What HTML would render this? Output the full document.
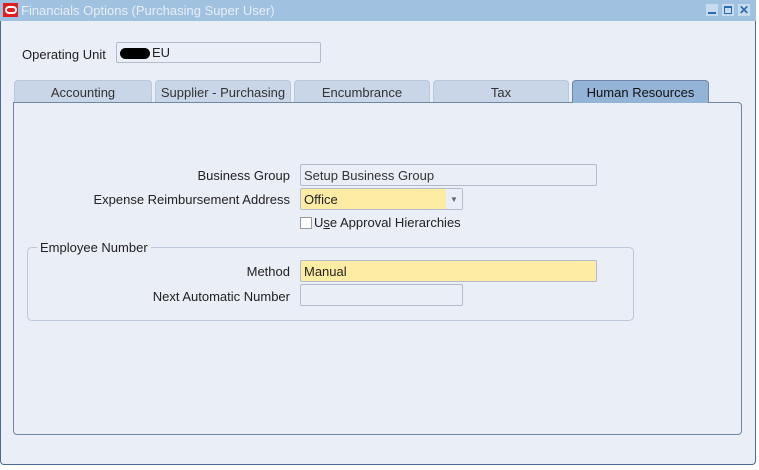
<!DOCTYPE html>
<html><head><style>
body{margin:0;width:759px;height:470px;background:#fff;font-family:"Liberation Sans",sans-serif;font-size:13px;color:#222;position:relative;overflow:hidden}
.a{position:absolute}
#win{left:0;top:0;width:754px;height:464px;border:1px solid #4a6a9a;border-top:none;background:#eaeef6;border-radius:0 0 4px 4px}
#tb{left:0;top:0;width:756px;height:21px;background:#a0c2e0}
.lbl{position:absolute;text-align:right;white-space:nowrap}
.fld{position:absolute;border:1px solid #b4bccb;box-sizing:border-box;padding-left:3px;line-height:21px;border-radius:2px}
.tab{position:absolute;top:80px;height:22px;background:#c8d6e8;border:1px solid #b7c7dc;border-bottom:none;border-radius:4px 4px 0 0;box-sizing:border-box;text-align:center;line-height:24px;color:#333}
</style></head><body>
<div id="win" class="a"></div>
<div id="tb" class="a"></div>
<div class="a" style="left:3px;top:3px;width:15px;height:14px;background:#e02020"><div class="a" style="left:2px;top:3px;width:8px;height:4px;border:2px solid #fff;border-radius:5px"></div></div>
<div class="a" style="left:21px;top:3px;color:#e6eef8;font-size:13px">Financials Options (Purchasing Super User)</div>
<div class="a" style="left:706px;top:4px;width:12px;height:12px;background:#c7dbef"><div class="a" style="left:2px;top:8px;width:8px;height:2px;background:#2a6ab0"></div></div>
<div class="a" style="left:722px;top:4px;width:12px;height:12px;background:#c7dbef"><div class="a" style="left:2px;top:2px;width:6px;height:5px;border:1px solid #2a6ab0;border-top-width:2px"></div></div>
<div class="a" style="left:738px;top:4px;width:12px;height:12px;background:#c7dbef;color:#2a6ab0;font-weight:bold;font-size:12px;line-height:12px;text-align:center">✕</div>

<div class="lbl" style="left:22px;top:47px">Operating Unit</div>
<div class="fld" style="left:116px;top:42px;width:205px;height:21px;background:#eaeef6;line-height:20px"><span style="display:inline-block;width:30px;height:11px;background:#000;border-radius:6px;vertical-align:middle;margin-right:2px"></span>EU</div>

<div class="tab" style="left:14px;width:138px">Accounting</div>
<div class="tab" style="left:155px;width:136px">Supplier - Purchasing</div>
<div class="tab" style="left:294px;width:136px">Encumbrance</div>
<div class="tab" style="left:433px;width:136px">Tax</div>
<div class="a" style="left:13px;top:102px;width:727px;height:331px;border:1px solid #6f86a8;border-radius:0 4px 4px 4px"></div>
<div class="tab" style="left:572px;width:137px;background:#93b4d6;border-color:#6f86a8;height:23px;color:#111;z-index:2">Human Resources</div>

<div class="lbl" style="right:469px;top:168px">Business Group</div>
<div class="fld" style="left:300px;top:164px;width:297px;height:22px;background:#eaeef6;color:#333">Setup Business Group</div>
<div class="lbl" style="right:469px;top:192px">Expense Reimbursement Address</div>
<div class="fld" style="left:300px;top:188px;width:163px;height:22px;background:#feeca4">Office<span class="a" style="right:0;top:0;width:16px;height:20px;background:#eaeef6;color:#666;font-size:8px;text-align:center">▼</span></div>
<div class="a" style="left:300px;top:217px;width:10px;height:10px;border:1px solid #999;background:#fff"></div>
<div class="a" style="left:314px;top:215px">U<u>s</u>e Approval Hierarchies</div>

<div class="a" style="left:27px;top:247px;width:605px;height:72px;border:1px solid #bcc8d8;border-radius:5px"></div>
<div class="a" style="left:37px;top:240px;background:#eaeef6;padding:0 3px">Employee Number</div>
<div class="lbl" style="right:469px;top:264px">Method</div>
<div class="fld" style="left:300px;top:260px;width:297px;height:22px;background:#feeca4">Manual</div>
<div class="lbl" style="right:469px;top:289px">Next Automatic Number</div>
<div class="fld" style="left:300px;top:284px;width:163px;height:22px;background:#eaeef6"></div>
</body></html>
